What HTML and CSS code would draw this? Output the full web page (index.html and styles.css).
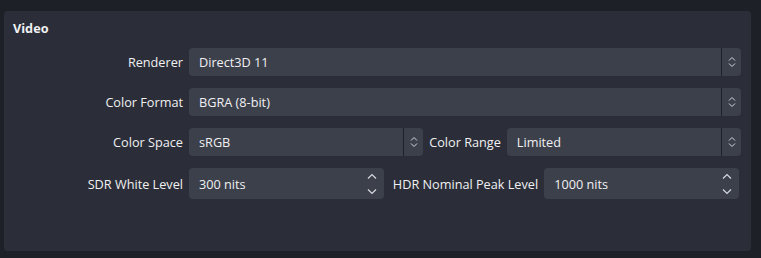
FILE: index.html
```html
<!DOCTYPE html>
<html>
<head>
  <meta charset="utf-8">
  <title>Video settings</title>
  <link rel="stylesheet" href="styles.css">
</head>
<body>
  <div class="panel">
    <div class="title">Video</div>
    <div class="form">
      <div class="lbl">Renderer</div>
      <div class="combo">
        <span class="value">Direct3D 11</span>
        <span class="drop"><svg width="8" height="12" viewBox="0 0 8 12"><path d="M1 4.5 L4 1.5 L7 4.5 M1 7.5 L4 10.5 L7 7.5" fill="none" stroke="#d6d8de" stroke-width="1"/></svg></span>
      </div>

      <div class="lbl">Color Format</div>
      <div class="combo">
        <span class="value">BGRA (8-bit)</span>
        <span class="drop"><svg width="8" height="12" viewBox="0 0 8 12"><path d="M1 4.5 L4 1.5 L7 4.5 M1 7.5 L4 10.5 L7 7.5" fill="none" stroke="#d6d8de" stroke-width="1"/></svg></span>
      </div>

      <div class="lbl">Color Space</div>
      <div class="pair">
        <div class="combo">
          <span class="value">sRGB</span>
          <span class="drop"><svg width="8" height="12" viewBox="0 0 8 12"><path d="M1 4.5 L4 1.5 L7 4.5 M1 7.5 L4 10.5 L7 7.5" fill="none" stroke="#d6d8de" stroke-width="1"/></svg></span>
        </div>
        <div class="lbl">Color Range</div>
        <div class="combo">
          <span class="value">Limited</span>
          <span class="drop"><svg width="8" height="12" viewBox="0 0 8 12"><path d="M1 4.5 L4 1.5 L7 4.5 M1 7.5 L4 10.5 L7 7.5" fill="none" stroke="#d6d8de" stroke-width="1"/></svg></span>
        </div>
      </div>

      <div class="lbl">SDR White Level</div>
      <div class="pair spins">
        <div class="spin">
          <span class="value">300 nits</span>
          <span class="arrows"><svg width="10" height="22" viewBox="0 0 10 22"><path d="M1 5.5 L5 1.5 L9 5.5 M1 16.5 L5 20.5 L9 16.5" fill="none" stroke="#d6d8de" stroke-width="1.2"/></svg></span>
        </div>
        <div class="lbl">HDR Nominal Peak Level</div>
        <div class="spin">
          <span class="value">1000 nits</span>
          <span class="arrows"><svg width="10" height="22" viewBox="0 0 10 22"><path d="M1 5.5 L5 1.5 L9 5.5 M1 16.5 L5 20.5 L9 16.5" fill="none" stroke="#d6d8de" stroke-width="1.2"/></svg></span>
        </div>
      </div>
    </div>
  </div>
</body>
</html>
```

FILE: styles.css
```css
html, body {
  margin: 0;
  padding: 0;
  background-color: #1e2028;
  color: #f0f0f2;
  font-family: "Open Sans", sans-serif;
  font-size: 12.7px;
}
.panel {
  margin: 11px 0 0 4px;
  width: 747px;
  height: 240px;
  box-sizing: border-box;
  padding: 8px 10px 0 9px;
  background-color: #2b2e38;
  border-radius: 4px;
}
.title {
  font-weight: bold;
  line-height: 18px;
}
.form {
  margin-top: 11px;
  display: grid;
  grid-template-columns: 170px 1fr;
  column-gap: 6px;
  row-gap: 12px;
  align-items: center;
}
.lbl {
  text-align: right;
  white-space: nowrap;
}
.combo, .spin {
  display: flex;
  align-items: center;
  height: 28px;
  background-color: #3c404b;
  border-radius: 4px;
}
.spin {
  height: 31px;
}
.value {
  flex: 1;
  padding-left: 10px;
}
.drop {
  display: flex;
  align-items: center;
  justify-content: center;
  width: 19px;
  align-self: stretch;
  border-left: 1px solid #1f2129;
}
.arrows {
  display: flex;
  align-items: center;
  padding-right: 7px;
}
.pair {
  display: flex;
  align-items: center;
  gap: 6px;
}
.pair .combo, .pair .spin {
  flex: 1;
}
.pair .lbl {
  padding-left: 0;
}
.spins {
  margin-right: 2px;
}
.spins .lbl {
  padding-left: 3px;
}
```
